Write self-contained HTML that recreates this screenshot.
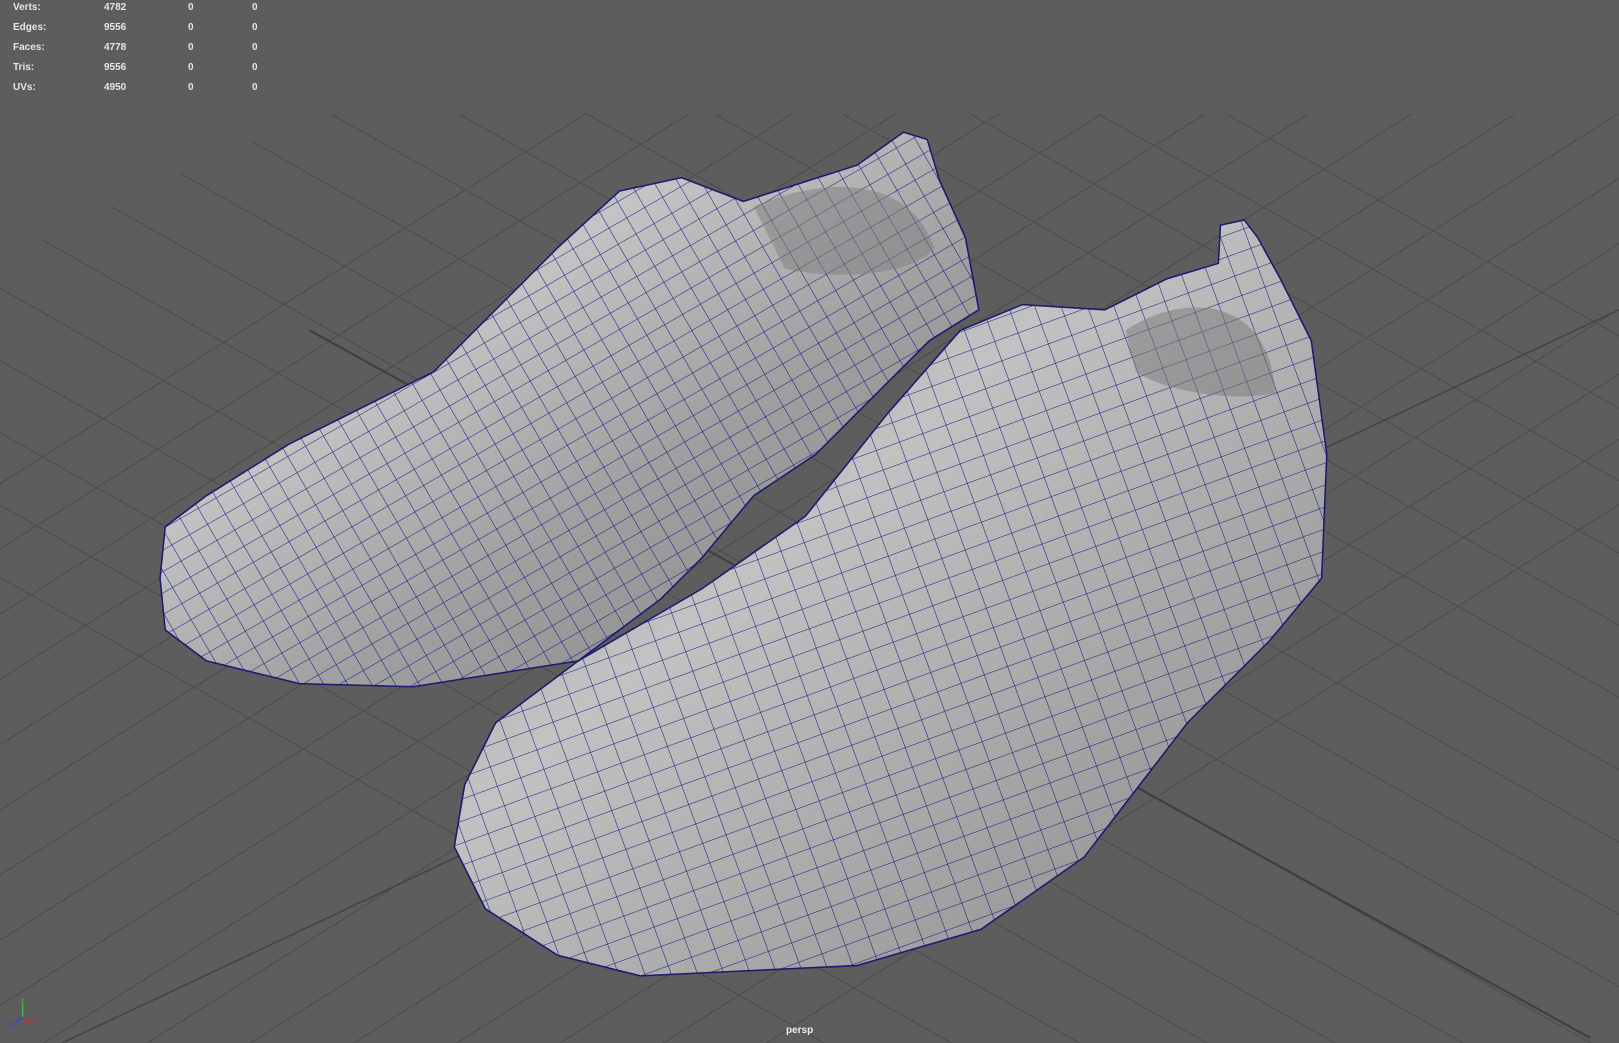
<!DOCTYPE html>
<html><head><meta charset="utf-8"><style>
html,body{margin:0;padding:0;background:#5d5d5d;width:1619px;height:1043px;overflow:hidden;font-family:"Liberation Sans",Arial,sans-serif;position:relative}
svg{position:absolute;left:0;top:0;display:block}
.st{position:absolute;left:13px;top:-2px;color:#e6e6e6;font-size:10px;font-weight:bold;line-height:20px}
.st div{height:20px;position:relative}
.st span{position:absolute;top:0}
</style></head><body>
<svg width="1619" height="1043" viewBox="0 0 1568 1010" preserveAspectRatio="none">
<defs>
<clipPath id="gc"><polygon points="0,250 300,110 1568,110 1568,1010 0,1010"/></clipPath>
<pattern id="mA" width="20" height="18" patternUnits="userSpaceOnUse" patternTransform="rotate(-30)">
<path d="M0 0H20M0 0V18" stroke="#151580" stroke-width="1" fill="none"/></pattern>
<pattern id="mB" width="24" height="20" patternUnits="userSpaceOnUse" patternTransform="rotate(-20)">
<path d="M0 0H24M0 0V20" stroke="#151580" stroke-width="1" fill="none"/></pattern>
<linearGradient id="g1" x1="0" y1="0" x2="1" y2="1"><stop offset="0" stop-color="#989898"/><stop offset=".35" stop-color="#c4c4c4"/><stop offset=".6" stop-color="#a0a0a0"/><stop offset="1" stop-color="#858585"/></linearGradient>
<linearGradient id="g2" x1="0" y1="0" x2="1" y2="1"><stop offset="0" stop-color="#9c9c9c"/><stop offset=".4" stop-color="#c2c2c2"/><stop offset=".7" stop-color="#a4a4a4"/><stop offset="1" stop-color="#888"/></linearGradient>
</defs>
<g clip-path="url(#gc)" stroke="#4c4c4c" stroke-width="1">
<g>
<line x1="-600" y1="-200" x2="1700" y2="1100"/><line x1="-600" y1="-130" x2="1700" y2="1170"/><line x1="-600" y1="-60" x2="1700" y2="1240"/><line x1="-600" y1="10" x2="1700" y2="1310"/><line x1="-600" y1="80" x2="1700" y2="1380"/><line x1="-600" y1="150" x2="1700" y2="1450"/><line x1="-600" y1="220" x2="1700" y2="1520"/><line x1="-600" y1="-270" x2="1700" y2="1030"/><line x1="-600" y1="-340" x2="1700" y2="960"/><line x1="-600" y1="-410" x2="1700" y2="890"/><line x1="-600" y1="-480" x2="1700" y2="820"/><line x1="-600" y1="-550" x2="1700" y2="750"/><line x1="-600" y1="-620" x2="1700" y2="680"/><line x1="-600" y1="-690" x2="1700" y2="610"/><line x1="-600" y1="-760" x2="1700" y2="540"/><line x1="-600" y1="-830" x2="1700" y2="470"/><line x1="-600" y1="-900" x2="1700" y2="400"/>
</g>
<g>
<line x1="-200" y1="1100" x2="1700" y2="-100"/><line x1="-100" y1="1100" x2="1800" y2="-100"/><line x1="0" y1="1100" x2="1900" y2="-100"/><line x1="100" y1="1100" x2="2000" y2="-100"/><line x1="200" y1="1100" x2="2100" y2="-100"/><line x1="300" y1="1100" x2="2200" y2="-100"/><line x1="400" y1="1100" x2="2300" y2="-100"/><line x1="500" y1="1100" x2="2400" y2="-100"/><line x1="600" y1="1100" x2="2500" y2="-100"/><line x1="-300" y1="1100" x2="1600" y2="-100"/><line x1="-400" y1="1100" x2="1500" y2="-100"/><line x1="-500" y1="1100" x2="1400" y2="-100"/><line x1="-600" y1="1100" x2="1300" y2="-100"/><line x1="-700" y1="1100" x2="1200" y2="-100"/><line x1="-800" y1="1100" x2="1100" y2="-100"/><line x1="-900" y1="1100" x2="1000" y2="-100"/><line x1="-1000" y1="1100" x2="900" y2="-100"/>
</g>
<line x1="300" y1="320" x2="1540" y2="1005" stroke="#3e3e3e" stroke-width="2"/>
<line x1="60" y1="1010" x2="1568" y2="300" stroke="#444" stroke-width="1.5"/>
</g>
<g>
<polygon fill="url(#g1)" stroke="#1a1a70" stroke-width="1.5" points="160,510 200,480 280,430 420,360 540,240 600,185 660,172 720,195 830,160 875,128 898,135 910,175 935,230 948,300 900,330 850,380 790,440 730,480 680,540 640,580 560,640 400,665 290,662 200,640 160,610 155,560"/>
<polygon fill="url(#mA)" points="160,510 200,480 280,430 420,360 540,240 600,185 660,172 720,195 830,160 875,128 898,135 910,175 935,230 948,300 900,330 850,380 790,440 730,480 680,540 640,580 560,640 400,665 290,662 200,640 160,610 155,560"/>
<path d="M730,200 C800,170 880,170 905,240 C880,270 800,270 760,260 Z" fill="#7e7e7e" opacity=".5"/>
</g>
<g>
<polygon fill="url(#g2)" stroke="#1a1a70" stroke-width="1.5" points="470,880 440,820 450,760 480,700 560,640 680,570 780,500 860,400 930,320 990,295 1070,300 1130,270 1180,255 1182,218 1205,213 1218,230 1240,270 1270,330 1285,440 1280,560 1230,620 1150,700 1050,830 950,900 830,935 620,945 540,925"/>
<polygon fill="url(#mB)" points="470,880 440,820 450,760 480,700 560,640 680,570 780,500 860,400 930,320 990,295 1070,300 1130,270 1180,255 1182,218 1205,213 1218,230 1240,270 1270,330 1285,440 1280,560 1230,620 1150,700 1050,830 950,900 830,935 620,945 540,925"/>
<path d="M1090,320 C1150,280 1230,290 1235,380 C1200,390 1130,380 1100,360 Z" fill="#7a7a7a" opacity=".5"/>
</g>
<g>
<line x1="22" y1="985" x2="22" y2="972" stroke="#3c3" stroke-width="1.2"/><text x="20" y="971" fill="#3c3" font-size="7">y</text>
<line x1="22" y1="985" x2="15" y2="990" stroke="#33f" stroke-width="1.2"/><text x="9" y="994" fill="#33f" font-size="7">z</text>
<line x1="22" y1="985" x2="30" y2="990" stroke="#e22" stroke-width="1.2"/><text x="31" y="992" fill="#e22" font-size="7">x</text>
</g>
</svg>
<div class="st">
<div>Verts:<span style="left:91px">4782</span><span style="left:175px">0</span><span style="left:239px">0</span></div>
<div>Edges:<span style="left:91px">9556</span><span style="left:175px">0</span><span style="left:239px">0</span></div>
<div>Faces:<span style="left:91px">4778</span><span style="left:175px">0</span><span style="left:239px">0</span></div>
<div>Tris:<span style="left:91px">9556</span><span style="left:175px">0</span><span style="left:239px">0</span></div>
<div>UVs:<span style="left:91px">4950</span><span style="left:175px">0</span><span style="left:239px">0</span></div>
</div>
<div style="position:absolute;left:786px;top:1025px;color:#eee;font-size:10px;line-height:12px;font-weight:bold">persp</div>
</body></html>
